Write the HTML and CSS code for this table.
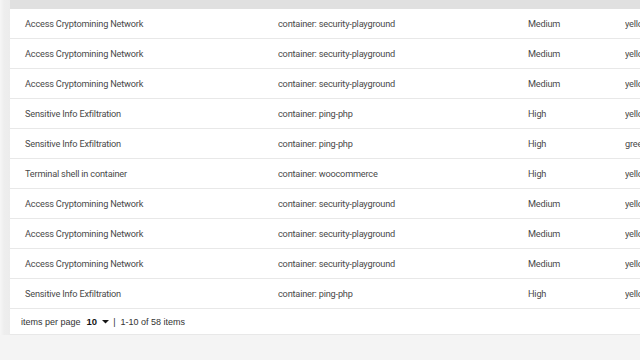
FILE: index.html
```html
<!DOCTYPE html>
<html>
<head>
<meta charset="utf-8">
<link rel="stylesheet" href="styles.css">
</head>
<body>
<div class="page">
  <div class="table-wrap">
    <div class="head-row"></div>
    <table class="grid">
      <colgroup><col class="c1"><col class="c2"><col class="c3"><col class="c4"></colgroup>
      <tbody>
        <tr><td>Access Cryptomining Network</td><td>container: security-playground</td><td>Medium</td><td>yellow</td></tr>
        <tr><td>Access Cryptomining Network</td><td>container: security-playground</td><td>Medium</td><td>yellow</td></tr>
        <tr><td>Access Cryptomining Network</td><td>container: security-playground</td><td>Medium</td><td>yellow</td></tr>
        <tr><td>Sensitive Info Exfiltration</td><td>container: ping-php</td><td>High</td><td>yellow</td></tr>
        <tr><td>Sensitive Info Exfiltration</td><td>container: ping-php</td><td>High</td><td>green</td></tr>
        <tr><td>Terminal shell in container</td><td>container: woocommerce</td><td>High</td><td>yellow</td></tr>
        <tr><td>Access Cryptomining Network</td><td>container: security-playground</td><td>Medium</td><td>yellow</td></tr>
        <tr><td>Access Cryptomining Network</td><td>container: security-playground</td><td>Medium</td><td>yellow</td></tr>
        <tr><td>Access Cryptomining Network</td><td>container: security-playground</td><td>Medium</td><td>yellow</td></tr>
        <tr><td>Sensitive Info Exfiltration</td><td>container: ping-php</td><td>High</td><td>yellow</td></tr>
      </tbody>
    </table>
    <div class="pager">
      <span class="lbl">items per page</span>
      <span class="num">10</span>
      <svg class="caret" width="7" height="4" viewBox="0 0 7 4"><path d="M0 0 L7 0 L3.5 3.5 Z" fill="#161616"/></svg>
      <span class="sep">|</span>
      <span class="range">1-10 of 58 items</span>
    </div>
  </div>
</div>
</body>
</html>
```
FILE: styles.css
```css
html, body { margin: 0; padding: 0; }
body {
  width: 640px;
  height: 360px;
  overflow: hidden;
  background: #f4f4f4;
  font-family: Roboto, "Noto Sans", sans-serif;
}
.page {
  padding-left: 10px;
  background: linear-gradient(to right, #f6f6f6 0, #eeeeee 4px, #ececec 10px, #f4f4f4 10px);
}
.table-wrap {
  background: #ffffff;
  width: 630px;
  overflow: hidden;
}
.head-row {
  height: 9px;
  background: #e0e0e0;
}
.grid {
  border-collapse: collapse;
  table-layout: fixed;
  width: 715px;
}
.c1 { width: 268px; }
.c2 { width: 250px; }
.c3 { width: 97px; }
.c4 { width: 100px; }
.grid td {
  height: 29px;
  padding: 0;
  border-bottom: 1px solid #e8e8e8;
  font-size: 9.2px;
  letter-spacing: -0.2px;
  color: #4a4a4a;
  white-space: nowrap;
  overflow: hidden;
  vertical-align: middle;
}
.grid td:first-child { padding-left: 15px; }
.pager {
  height: 25px;
  display: flex;
  align-items: center;
  padding-left: 11px;
  font-family: "Liberation Sans", Arial, sans-serif;
  font-size: 9px;
  color: #333;
  border-bottom: 1px solid #e8e8e8;
}
.lbl { margin-right: 6px; }
.num { font-weight: bold; color: #161616; font-size: 9.5px; margin-right: 5px; }
.caret { margin-right: 4px; }
.sep { margin-right: 5px; }
```
